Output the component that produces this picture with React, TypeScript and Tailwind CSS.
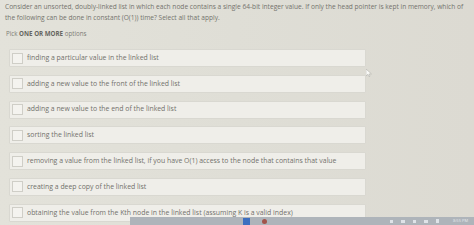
import React from 'react';

const options = [
  'finding a particular value in the linked list',
  'adding a new value to the front of the linked list',
  'adding a new value to the end of the linked list',
  'sorting the linked list',
  'removing a value from the linked list, if you have O(1) access to the node that contains that value',
  'creating a deep copy of the linked list',
  'obtaining the value from the Kth node in the linked list (assuming K is a valid index)',
];

export default function App() {
  return (
    <div
      className="relative w-[474px] h-[225px] overflow-hidden bg-gradient-to-r from-[#e3e2da] via-[#dfded6] to-[#dcdad2] text-[#74736d]"
      style={{ fontFamily: '"Open Sans", "Noto Sans", sans-serif' }}
    >
      {/* question */}
      <div className="pl-[5px] pr-[10px] pt-[1px] text-[6.6px] leading-[11px]">
        Consider an unsorted, doubly-linked list in which each node contains a single 64-bit integer value. If only the head pointer is kept in memory, which of the following can be done in constant (O(1)) time? Select all that apply.
      </div>

      <div className="mt-[6px] pl-[6px] text-[6.2px] leading-[10px] text-[#7c7b75]">
        Pick <span className="font-bold text-[#66655f]">ONE OR MORE</span> options
      </div>

      {/* options */}
      <div className="mt-[10px] ml-[9px] w-[357px] flex flex-col gap-[7.8px]">
        {options.map((o) => (
          <div
            key={o}
            className="h-[18px] flex items-center gap-[4px] pl-[2px] bg-[#efeee9] border border-[#d9d8d1] rounded-[1px]"
          >
            <div className="w-[11px] h-[11px] bg-[#f4f3ef] border border-[#cfcec7]" />
            <span className="text-[6.9px] whitespace-nowrap text-[#72716b]">{o}</span>
          </div>
        ))}
      </div>

      {/* mouse cursor */}
      <svg className="absolute left-[366px] top-[69px]" width="6" height="8" viewBox="0 0 6 8">
        <path d="M0 0 L0 7 L1.8 5.3 L3 7.6 L4 7.1 L2.9 4.9 L5.4 4.9 Z" fill="#fbfbf8" stroke="#9a9a94" strokeWidth="0.4" />
      </svg>

      {/* taskbar */}
      <div className="absolute left-[130px] right-0 top-[217px] bottom-0 bg-[#aeb4ba] flex items-center">
        <div className="ml-[113px] w-[7px] h-[7px] bg-[#3c6fc0]" />
        <div className="ml-[12px] w-[5px] h-[5px] rounded-full bg-[#a2534a]" />
        <div className="ml-auto flex items-center gap-[8px] mr-[6px] text-[4px] text-[#e8eaee]">
          <span className="w-[3px] h-[3px] bg-[#dfe3e8]" />
          <span className="w-[4px] h-[3px] bg-[#dfe3e8]" />
          <span className="w-[3px] h-[3px] bg-[#dfe3e8]" />
          <span className="w-[4px] h-[3px] bg-[#dfe3e8]" />
          <span className="w-[3px] h-[4px] bg-[#dfe3e8]" />
          <span className="ml-[6px] leading-none">8:55 PM</span>
        </div>
      </div>
    </div>
  );
}
